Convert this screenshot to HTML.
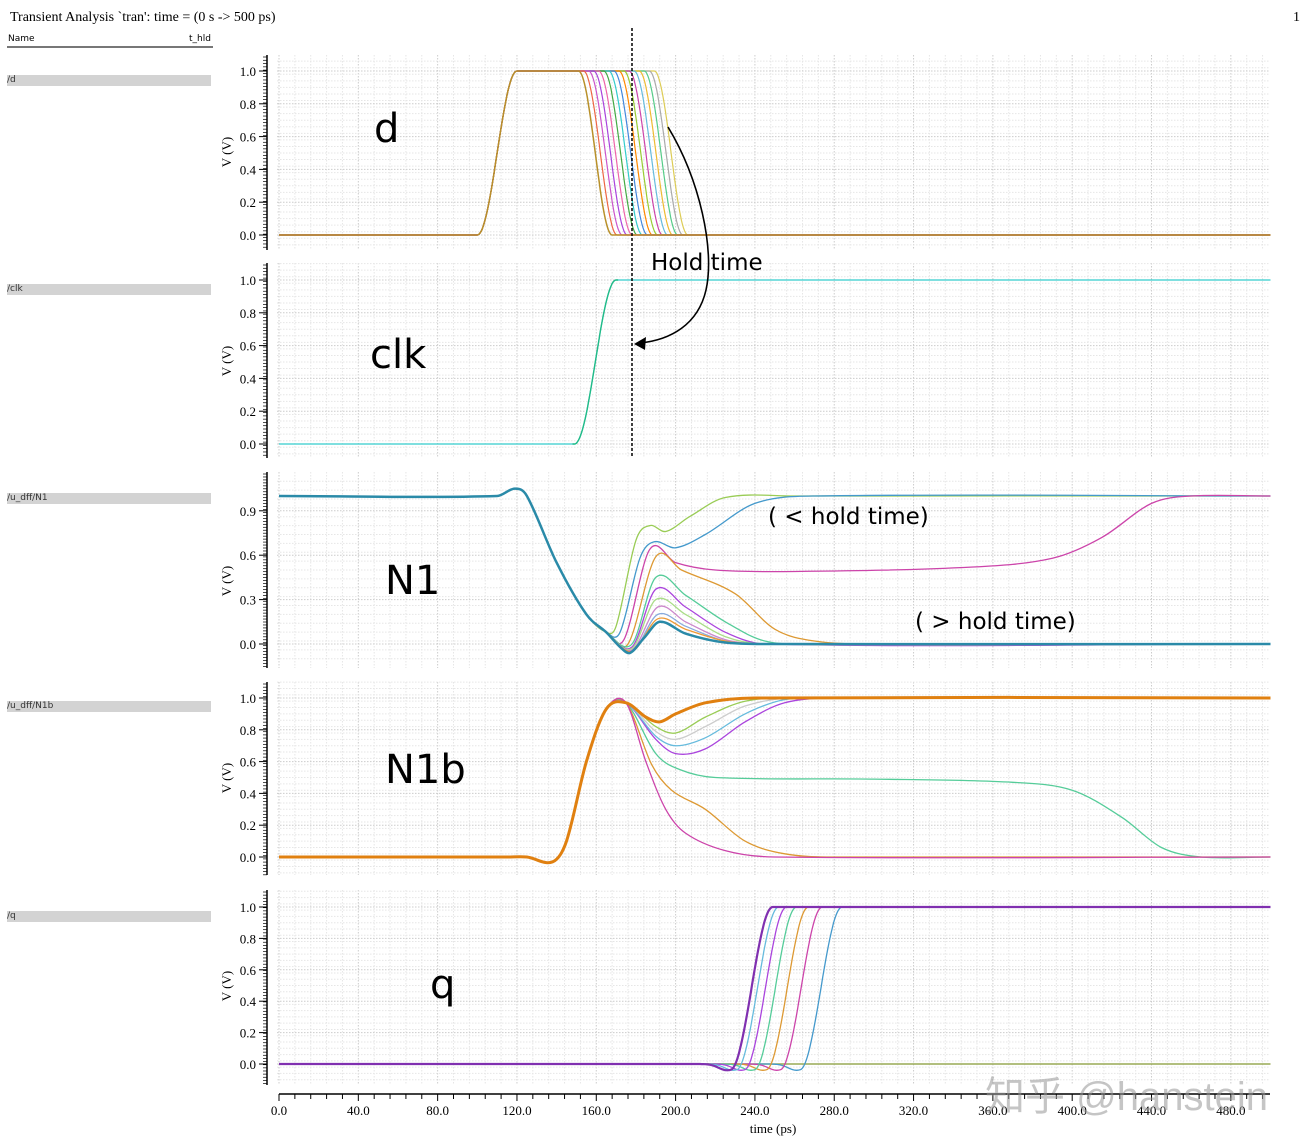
<!DOCTYPE html>
<html><head><meta charset="utf-8"><style>
body{margin:0;background:#fff;width:1304px;height:1143px;overflow:hidden;position:relative;font-family:"Liberation Serif",serif}
.t{position:absolute;white-space:nowrap}
.bar{position:absolute;left:7px;width:204px;height:11px;background:#d3d3d3;font:9px "DejaVu Sans",sans-serif;line-height:11px;color:#333}
.big{position:absolute;font-family:"DejaVu Sans","Liberation Sans",sans-serif;color:#000;white-space:nowrap}
</style></head><body>
<div class="t" style="left:10px;top:10px;font-size:14px">Transient Analysis `tran': time = (0 s -&gt; 500 ps)</div>
<div class="t" style="left:1293px;top:10px;font-size:14px">1</div>
<div class="t" style="left:8px;top:34px;font:9px 'DejaVu Sans',sans-serif">Name</div>
<div class="t" style="left:189px;top:34px;font:9px 'DejaVu Sans',sans-serif">t_hld</div>
<div style="position:absolute;left:7px;top:46px;width:206px;height:2px;background:#777"></div>
<div class="bar" style="top:75px">/d</div>
<div class="bar" style="top:284px">/clk</div>
<div class="bar" style="top:493px">/u_dff/N1</div>
<div class="bar" style="top:701px">/u_dff/N1b</div>
<div class="bar" style="top:911px">/q</div>
<svg id="s" width="1304" height="1143" style="position:absolute;left:0;top:0"></svg>
<div class="big" style="left:374px;top:106px;font-size:40px">d</div>
<div class="big" style="left:370px;top:332px;font-size:40px">clk</div>
<div class="big" style="left:385px;top:558px;font-size:40px">N1</div>
<div class="big" style="left:385px;top:747px;font-size:40px">N1b</div>
<div class="big" style="left:430px;top:962px;font-size:40px">q</div>
<div class="big" style="left:651px;top:250px;font-size:23px">Hold time</div>
<div class="big" style="left:768px;top:504px;font-size:23px">( &lt; hold time)</div>
<div class="big" style="left:915px;top:609px;font-size:23px">( &gt; hold time)</div>
<div class="big" style="left:985px;top:1064px;font-size:40px;color:rgba(150,150,150,0.55);font-family:'Liberation Sans','Noto Sans CJK SC',sans-serif">知乎 @hanstein</div>
<script>
var S=document.getElementById('s'),h='';
function X(t){return 279+t*1.983}
var panels=[
 {top:55,bot:250,y0:235,y1:71,lab:[0,.2,.4,.6,.8,1],vl:152},
 {top:263,bot:458,y0:444,y1:280,lab:[0,.2,.4,.6,.8,1],vl:361},
 {top:472,bot:668,y0:644,y1:496,lab:[0,.3,.6,.9],vl:581},
 {top:682,bot:875,y0:857,y1:698,lab:[0,.2,.4,.6,.8,1],vl:778},
 {top:890,bot:1085,y0:1064,y1:907,lab:[0,.2,.4,.6,.8,1],vl:986}];
panels.forEach(function(p){
 var sc=p.y0-p.y1;
 for(var t=0;t<=500;t+=8){var x=X(t);h+='<line x1="'+x+'" y1="'+p.top+'" x2="'+x+'" y2="'+p.bot+'" stroke="'+(t%40==0?'#ccc':'#e6e6e6')+'" stroke-dasharray="1.5 1.5"/>';}
 var st=(p.lab[1]==.3)?0.06:0.04;
 for(var v=-0.1;v<=1.12;v+=st){var y=p.y0-v*sc;if(y<p.top||y>p.bot)continue;h+='<line x1="277" y1="'+y+'" x2="1270" y2="'+y+'" stroke="#e6e6e6" stroke-dasharray="1.5 1.5"/>';}
 p.lab.forEach(function(v){var y=p.y0-v*sc;h+='<line x1="277" y1="'+y+'" x2="1270" y2="'+y+'" stroke="#ccc" stroke-dasharray="1.5 1.5"/>';
  h+='<text x="256" y="'+(y+5)+'" font-size="13" text-anchor="end" font-family="Liberation Serif">'+v.toFixed(1)+'</text><line x1="259" y1="'+y+'" x2="267" y2="'+y+'" stroke="#000"/>';});
 h+='<line x1="267" y1="'+p.top+'" x2="267" y2="'+p.bot+'" stroke="#000" stroke-width="1.5"/>';
 for(var y=p.top+2;y<p.bot;y+=sc/50){h+='<line x1="263" y1="'+y+'" x2="267" y2="'+y+'" stroke="#000" stroke-width=".7"/>';}
 h+='<text transform="translate(231,'+p.vl+') rotate(-90)" font-size="13" text-anchor="middle" font-family="Liberation Serif">V (V)</text>';
});
h+='<line x1="279" y1="1094" x2="1270" y2="1094" stroke="#000" stroke-width="1.5"/>';
for(var t=0;t<=496;t+=8){var x=X(t);h+='<line x1="'+x+'" y1="1094" x2="'+x+'" y2="'+(t%40==0?1101:1099)+'" stroke="#000"/>';}
for(var t=0;t<=480;t+=40){h+='<text x="'+X(t)+'" y="1115" font-size="13" text-anchor="middle" font-family="Liberation Serif">'+t.toFixed(1)+'</text>';}
h+='<text x="773" y="1133" font-size="13" text-anchor="middle" font-family="Liberation Serif">time (ps)</text>';
function cr(P,p){var sc=p.y0-p.y1;function px(t,v){return X(t).toFixed(1)+' '+(p.y0-v*sc).toFixed(1)}
 var n=P.length,m=[];
 for(var i=0;i<n;i++){var a=P[Math.max(0,i-1)],c=P[Math.min(n-1,i+1)];m[i]=(c[1]-a[1])/(c[0]-a[0]);}
 var d='M'+px(P[0][0],P[0][1]);
 for(var i=0;i<n-1;i++){var b=P[i],c=P[i+1],dt=c[0]-b[0];
  d+='C'+px(b[0]+dt/3,b[1]+m[i]*dt/3)+' '+px(c[0]-dt/3,c[1]-m[i+1]*dt/3)+' '+px(c[0],c[1]);}
 return d;}
function fn(f,p,a,b){a=a||0;b=(b===undefined)?500:b;var d='';for(var t=a;t<=b;t+=0.5){var v=f(t);d+=(t==a?'M':'L')+X(t).toFixed(1)+' '+(p.y0-v*(p.y0-p.y1)).toFixed(1);}return d;}
function ss(t,a,w){if(t<=a)return 0;if(t>=a+w)return 1;return .5-.5*Math.cos(Math.PI*(t-a)/w);}
function path(d,c,w){h+='<path d="'+d+'" fill="none" stroke="'+c+'" stroke-width="'+(w||1.2)+'"/>';}
var rb=['#b8902a','#e64','#c5c','#a4d','#e6a','#4a4','#3cc','#48d','#f80','#9c3','#c4a','#6bd','#eb3','#5c8','#aaa','#dc5'];
for(var k=15;k>=0;k--){(function(k){var a=151+k*2.55;path(fn(function(t){return ss(t,100,20)-ss(t,a,17)},panels[0]),rb[k],k==0?1.5:1.2)})(k);}
path(fn(function(t){return ss(t,149,21)},panels[1]),'#3cc');
path(fn(function(t){return ss(t,149,21)},panels[1],148,171),'#2b8',1.4);
var p2=panels[2],pre=[[0,1],[110,1],[119,1.05],[125,1.0],[140,0.55],[155,0.2],[165,0.08]];
var n1=[
 ['#9c5',[[170,0.12],[180,0.7],[187,0.8],[195,0.76],[207,0.86],[225,0.99],[260,1],[500,1]]],
 ['#49c',[[172,0.08],[182,0.58],[189,0.69],[200,0.65],[215,0.74],[240,0.95],[270,1],[500,1]]],
 ['#c4a',[[174,0.03],[187,0.64],[200,0.55],[220,0.5],[260,0.49],[350,0.52],[390,0.58],[415,0.72],[440,0.95],[460,1],[500,1]]],
 ['#d93',[[176,0],[190,0.59],[203,0.5],[230,0.34],[250,0.1],[270,0.02],[300,0],[500,0]]],
 ['#5c9',[[178,0],[190,0.45],[205,0.33],[225,0.15],[245,0.02],[270,0],[500,0]]],
 ['#a4d',[[178,-0.02],[190,0.37],[205,0.25],[225,0.08],[245,0],[500,0]]],
 ['#ad8',[[178,-0.03],[190,0.3],[205,0.2],[225,0.05],[245,0],[500,0]]],
 ['#c8c',[[178,-0.04],[191,0.25],[205,0.15],[225,0.03],[245,0],[500,0]]],
 ['#8ad',[[178,-0.05],[191,0.2],[205,0.12],[225,0.02],[245,0],[500,0]]],
 ['#e93',[[178,-0.05],[191,0.17],[205,0.1],[225,0.02],[245,0],[500,0]]]];
n1.forEach(function(c){path(cr(pre.concat(c[1]),p2),c[0],1.3)});
path(cr(pre.concat([[172,-0.02],[177,-0.06],[184,0.04],[192,0.15],[205,0.07],[225,0.01],[250,0],[500,0]]),p2),'#2a8aa8',2.5);
var p3=panels[3],pre3=[[0,0],[115,0],[125,0],[138,-0.03],[145,0.1],[155,0.6],[165,0.93],[175,0.97]];
var nb=[
 ['#5c9',[[190,0.65],[202,0.55],[220,0.5],[300,0.49],[370,0.47],[400,0.42],[425,0.25],[445,0.06],[465,0],[500,0]]],
 ['#d93',[[188,0.58],[198,0.42],[215,0.3],[235,0.1],[255,0.02],[280,0],[500,0]]],
 ['#c4a',[[185,0.6],[195,0.3],[205,0.15],[225,0.04],[250,0],[500,0]]],
 ['#a4d',[[190,0.74],[200,0.65],[215,0.68],[235,0.85],[255,0.97],[280,1],[500,1]]],
 ['#6bd',[[190,0.76],[200,0.7],[215,0.75],[235,0.9],[255,0.99],[280,1],[500,1]]],
 ['#ccc',[[190,0.79],[200,0.74],[215,0.82],[235,0.95],[260,1],[500,1]]],
 ['#9c5',[[190,0.82],[200,0.78],[215,0.88],[235,0.98],[260,1],[500,1]]]];
nb.forEach(function(c){path(cr(pre3.concat(c[1]),p3),c[0],1.3)});
path(cr(pre3.concat([[185,0.88],[192,0.85],[200,0.9],[215,0.97],[240,1],[500,1]]),p3),'#e08010',3);
var p4=panels[4];
path(fn(function(t){return 0},p4),'#9a5',1.5);
[[263,'#49c'],[253,'#c4a'],[246,'#d93'],[240,'#5c9'],[235,'#a4d'],[231,'#6bd'],[228,'#8030b0']].forEach(function(c,i){
 var m=c[0];path(fn(function(t){return ss(t,m,21)-0.04*Math.exp(-Math.pow((t-m+2)/6,2))},p4),c[1],i==6?2.2:1.3)});
h+='<line x1="632" y1="28" x2="632" y2="457" stroke="#000" stroke-width="1.5" stroke-dasharray="3 2"/>';
h+='<path d="M668 127 C700 180 715 250 706 290 C698 325 670 340 640 343" fill="none" stroke="#000" stroke-width="1.6"/>';
h+='<path d="M634 344 L646 337 L645 350 Z" fill="#000"/>';
S.innerHTML=h;
</script>
</body></html>
